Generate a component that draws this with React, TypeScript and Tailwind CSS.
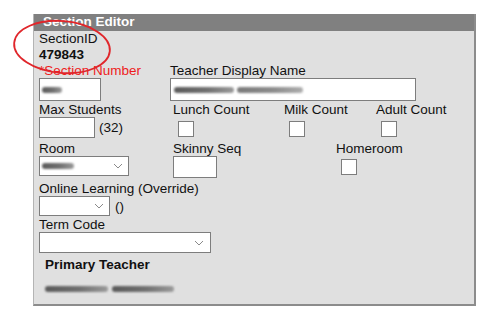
import React from 'react';

const FONT = { fontFamily: '"Liberation Sans", Arial, sans-serif' };

function Chevron() {
  return (
    <svg width="10" height="6" viewBox="0 0 10 6" className="shrink-0">
      <polyline points="1,1 5,5 9,1" fill="none" stroke="#8a8a8a" strokeWidth="1" />
    </svg>
  );
}

function Smudge({ w, className = '' }: { w: number; className?: string }) {
  return (
    <div
      className={`h-[6px] rounded-full bg-[linear-gradient(90deg,#5a5a5a,#707070_55%,#9a9a9a)] blur-[0.8px] ${className}`}
      style={{ width: w }}
    />
  );
}

function Box() {
  return <div className="h-[16px] w-[16px] border border-[#7d7d7d] bg-white" />;
}

function Label({ children, className = '' }: { children: React.ReactNode; className?: string }) {
  return <div className={`h-[15px] text-[13.5px] leading-[15px] text-[#111] ${className}`}>{children}</div>;
}

export default function App() {
  return (
    <div className="relative h-[320px] w-[486px] bg-white" style={FONT}>
      <div className="pt-[14px] pl-[33px]">
        <div className="flex h-[292px] w-[443px] flex-col border-l border-l-[#b4b4b4] border-r-2 border-b-2 border-r-[#8c8c8c] border-b-[#8c8c8c] bg-[#e0e0e0]">
          <div className="flex h-[17px] items-center bg-[#808080] pl-[9px] text-[13.5px] font-bold text-white">
            Section Editor
          </div>
          <div className="flex flex-col pl-[5px]">
            <Label>SectionID</Label>
            <Label className="mt-[1px] font-bold">479843</Label>
            <div className="mt-[1px] flex">
              <div className="flex w-[131px] flex-col">
                <Label className="text-[#ee1c1c]">*Section Number</Label>
                <div className="flex h-[23px] w-[62px] items-center border border-[#7d7d7d] bg-white pl-[2px]">
                  <Smudge w={20} />
                </div>
              </div>
              <div className="flex flex-col">
                <Label>Teacher Display Name</Label>
                <div className="flex h-[23px] w-[246px] items-center gap-[3px] border border-[#7d7d7d] bg-white pl-[3px]">
                  <Smudge w={60} />
                  <Smudge w={66} className="opacity-80" />
                </div>
              </div>
            </div>

            <div className="mt-[1px] flex">
              <div className="flex w-[134px] flex-col">
                <Label>Max Students</Label>
                <div className="flex items-center">
                  <div className="h-[21px] w-[56px] border border-[#7d7d7d] bg-white" />
                  <span className="ml-[4px] text-[13.5px] leading-[15px] text-[#111]">(32)</span>
                </div>
              </div>
              <div className="flex w-[111px] flex-col">
                <Label>Lunch Count</Label>
                <div className="ml-[5px] mt-[4px]"><Box /></div>
              </div>
              <div className="flex w-[92px] flex-col">
                <Label>Milk Count</Label>
                <div className="ml-[5px] mt-[4px]"><Box /></div>
              </div>
              <div className="flex flex-col">
                <Label>Adult Count</Label>
                <div className="ml-[5px] mt-[4px]"><Box /></div>
              </div>
            </div>

            <div className="mt-[3px] flex">
              <div className="flex w-[134px] flex-col">
                <Label>Room</Label>
                <div className="flex h-[20px] w-[90px] items-center justify-between border border-[#7d7d7d] bg-white pl-[2px] pr-[5px]">
                  <Smudge w={32} />
                  <Chevron />
                </div>
              </div>
              <div className="flex w-[163px] flex-col">
                <Label>Skinny Seq</Label>
                <div className="h-[22px] w-[44px] border border-[#7d7d7d] bg-white" />
              </div>
              <div className="flex flex-col">
                <Label>Homeroom</Label>
                <div className="ml-[5px] mt-[3px]"><Box /></div>
              </div>
            </div>

            <Label className="mt-[3px]">Online Learning (Override)</Label>
            <div className="flex items-center">
              <div className="flex h-[20px] w-[71px] items-center justify-end border border-[#7d7d7d] bg-white pr-[5px]">
                <Chevron />
              </div>
              <span className="ml-[5px] text-[13.5px] leading-[15px] text-[#111]">()</span>
            </div>

            <Label className="mt-[1px]">Term Code</Label>
            <div className="flex h-[21px] w-[172px] items-center justify-end border border-[#7d7d7d] bg-white pr-[6px]">
              <Chevron />
            </div>

            <Label className="ml-[6px] mt-[4px] font-bold">Primary Teacher</Label>
            <div className="ml-[6px] mt-[14px] flex gap-[4px]">
              <Smudge w={63} />
              <Smudge w={62} />
            </div>
          </div>
        </div>
      </div>

      <svg className="pointer-events-none absolute left-[8px] top-[16px]" width="108" height="64" viewBox="0 0 108 64">
        <ellipse cx="54" cy="31" rx="48" ry="26" fill="none" stroke="#e0262b" strokeWidth="1.8" transform="rotate(5 54 31)" />
      </svg>
    </div>
  );
}
